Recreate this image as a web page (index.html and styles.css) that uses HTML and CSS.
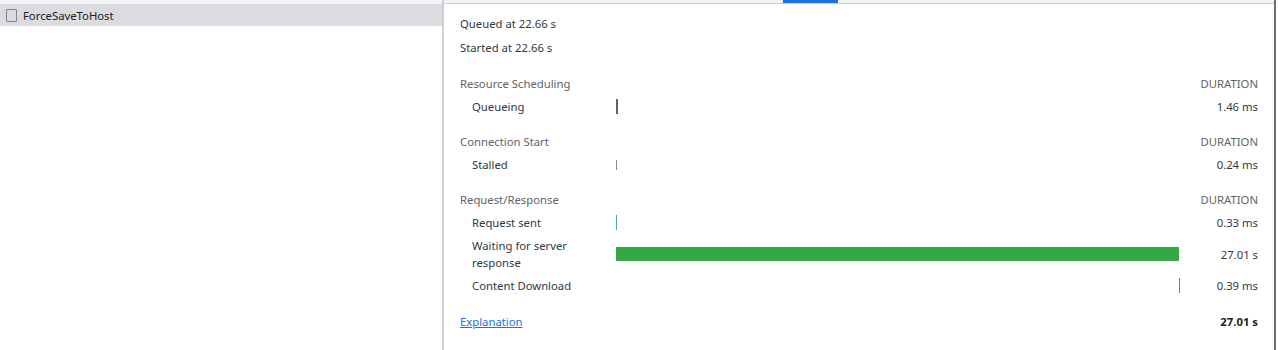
FILE: index.html
```html
<!DOCTYPE html>
<html lang="en">
<head>
    <meta charset="UTF-8">
    <title>Timing</title>
    <link rel="stylesheet" href="styles.css">
</head>
<body>
    <div class="sidebar">
        <div class="sidebar-top"></div>
        <div class="request-row selected">
            <span class="file-icon"></span>
            <span class="request-name">ForceSaveToHost</span>
        </div>
    </div>

    <div class="pane">
        <div class="tab-strip">
            <div class="tab-indicator"></div>
        </div>
        <div class="timing">
            <div class="meta">Queued at 22.66 s</div>
            <div class="meta">Started at 22.66 s</div>

            <div class="section">
                <div class="row header">
                    <div class="label">Resource Scheduling</div>
                    <div class="bar-cell"></div>
                    <div class="duration">DURATION</div>
                </div>
                <div class="row">
                    <div class="label sub">Queueing</div>
                    <div class="bar-cell"><span class="bar queueing" style="margin-left: 0; width: 2px"></span></div>
                    <div class="duration">1.46 ms</div>
                </div>
            </div>

            <div class="section">
                <div class="row header">
                    <div class="label">Connection Start</div>
                    <div class="bar-cell"></div>
                    <div class="duration">DURATION</div>
                </div>
                <div class="row">
                    <div class="label sub">Stalled</div>
                    <div class="bar-cell"><span class="bar stalled" style="margin-left: 0; width: 1px"></span></div>
                    <div class="duration">0.24 ms</div>
                </div>
            </div>

            <div class="section">
                <div class="row header">
                    <div class="label">Request/Response</div>
                    <div class="bar-cell"></div>
                    <div class="duration">DURATION</div>
                </div>
                <div class="row">
                    <div class="label sub">Request sent</div>
                    <div class="bar-cell"><span class="bar sending" style="margin-left: 0; width: 1px"></span></div>
                    <div class="duration">0.33 ms</div>
                </div>
                <div class="row">
                    <div class="label sub">Waiting for server<br>response</div>
                    <div class="bar-cell"><span class="bar waiting" style="margin-left: 0; width: 99.8%"></span></div>
                    <div class="duration">27.01 s</div>
                </div>
                <div class="row">
                    <div class="label sub">Content Download</div>
                    <div class="bar-cell"><span class="bar receiving" style="margin-left: 99.8%; width: 1px"></span></div>
                    <div class="duration">0.39 ms</div>
                </div>
            </div>

            <div class="section summary">
                <div class="row">
                    <div class="label"><a href="#" class="explain-link">Explanation</a></div>
                    <div class="bar-cell"></div>
                    <div class="duration total">27.01 s</div>
                </div>
            </div>
        </div>
    </div>
</body>
</html>
```

FILE: styles.css
```css
body, html {
    margin: 0;
    padding: 0;
    height: 350px;
    background: white;
    font-family: "Noto Sans", sans-serif;
    font-size: 11.3px;
    color: #303942;
}

body {
    display: flex;
    overflow: hidden;
}

.sidebar {
    width: 442px;
    flex-shrink: 0;
    border-right: 2px solid #cdcfd3;
}

.sidebar-top {
    height: 4px;
    background-color: #f1f3f4;
    border-bottom: 1px solid #dadce0;
}

.request-row {
    height: 21px;
    display: flex;
    align-items: center;
    padding-left: 6px;
}

.request-row.selected {
    background-color: #dadce0;
}

.file-icon {
    width: 9px;
    height: 11px;
    border: 1px solid #80868b;
    border-radius: 1px;
    margin-right: 6px;
}

.request-name {
    color: #202124;
}

.pane {
    width: 830px;
    flex-shrink: 0;
    border-right: 2px solid #6f6f6f;
}

.tab-strip {
    height: 3px;
    background-color: #f1f3f4;
    border-bottom: 1px solid #cdcfd3;
    display: flex;
    padding-left: 339px;
}

.tab-indicator {
    width: 55px;
    height: 3px;
    background-color: #1a73e8;
}

.timing {
    padding: 8px 16px 0 16px;
}

.meta {
    line-height: 24px;
}

.section {
    margin-top: 12px;
}

.section.summary {
    margin-top: 13px;
}

.row {
    display: flex;
    align-items: center;
    padding: 3px 0;
    line-height: 17px;
}

.header .label,
.header .duration {
    color: #5f6368;
}

.label {
    width: 156px;
    flex-shrink: 0;
    box-sizing: border-box;
}

.label.sub {
    padding-left: 12px;
}

.bar-cell {
    flex: 1;
    display: flex;
    align-items: center;
}

.bar {
    display: block;
    height: 15px;
}

.bar.queueing {
    background-color: #5f6368;
}

.bar.stalled {
    height: 10px;
    background-color: #8a8a8a;
}

.bar.sending {
    background-color: #5f9ea0;
}

.bar.waiting {
    height: 14px;
    background-color: #34a845;
}

.bar.receiving {
    background-color: #3b8ad9;
}

.duration {
    width: 78px;
    flex-shrink: 0;
    text-align: right;
}

.duration.total {
    font-weight: bold;
    color: #202124;
}

.explain-link {
    color: #1a73e8;
    text-decoration: underline;
}
```
